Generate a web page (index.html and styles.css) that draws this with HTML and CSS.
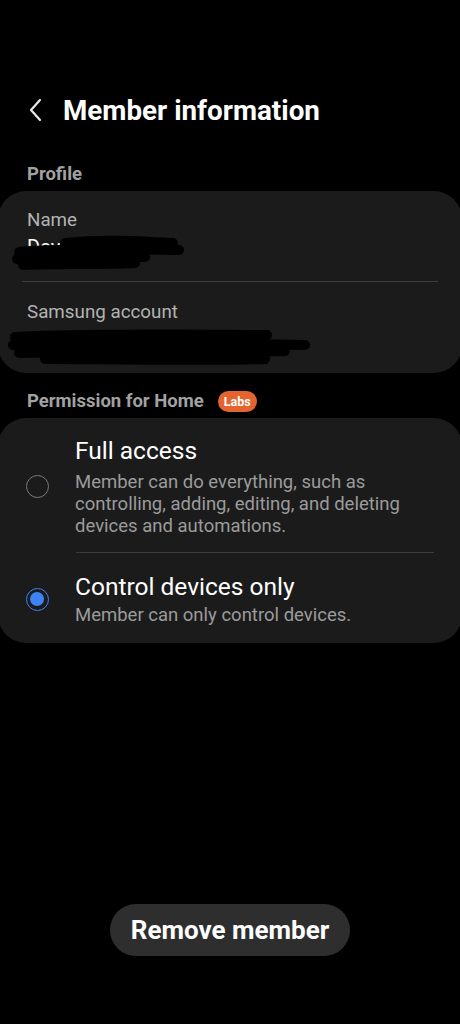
FILE: index.html
```html
<html charset="UTF-8">

<head>
  <link rel="stylesheet" href="styles.css">
</head>

<body>
  <div id="screen">
    <header class="topbar">
      <svg class="back" width="16" height="24" viewBox="0 0 16 24">
        <path d="M12 2 L3 12 L12 22" fill="none" stroke="#e8e8e8" stroke-width="2.2" stroke-linecap="round" stroke-linejoin="round"/>
      </svg>
      <h1>Member information</h1>
    </header>

    <p class="section">Profile</p>
    <div class="card profile">
      <div class="field">
        <p class="label">Name</p>
        <div class="value">
          <span class="valueText">Dav</span>
          <svg class="scribble" width="200" height="40" viewBox="0 0 200 40">
            <path d="M60 8 C100 4 130 6 168 8 M14 17 C60 13 120 14 174 15 M12 24 C50 20 100 22 140 22 M18 30 C50 28 90 30 130 28" fill="none" stroke="#000" stroke-width="10" stroke-linecap="round"/>
          </svg>
        </div>
      </div>
      <div class="divider"></div>
      <div class="field">
        <p class="label">Samsung account</p>
        <div class="value">
          <svg class="scribble" width="320" height="40" viewBox="0 0 320 40">
            <path d="M10 10 C100 6 200 8 262 8 M8 18 C120 14 220 16 300 18 M14 26 C100 24 200 26 280 24 M40 32 C120 32 200 34 260 32" fill="none" stroke="#000" stroke-width="10" stroke-linecap="round"/>
          </svg>
        </div>
      </div>
    </div>

    <div class="section sectionRow">
      <span>Permission for Home</span>
      <span class="badge">Labs</span>
    </div>
    <div class="card perms">
      <div class="option">
        <span class="radio"></span>
        <div class="optText">
          <p class="optTitle">Full access</p>
          <p class="optDesc">Member can do everything, such as controlling, adding, editing, and deleting devices and automations.</p>
        </div>
      </div>
      <div class="divider inset"></div>
      <div class="option">
        <span class="radio on"></span>
        <div class="optText">
          <p class="optTitle">Control devices only</p>
          <p class="optDesc">Member can only control devices.</p>
        </div>
      </div>
    </div>

    <div class="bottom">
      <button class="remove">Remove member</button>
    </div>
  </div>
</body>

</html>
```

FILE: styles.css
```css
body {
  margin: 0;
  background-color: black;
  font-family: Roboto, "Noto Sans", sans-serif;
  color: white;
}

p {
  margin: 0;
}

#screen {
  width: 460px;
  height: 1024px;
  display: flex;
  flex-direction: column;
  overflow: hidden;
}

.topbar {
  display: flex;
  align-items: center;
  padding: 92px 0 0 28px;
  height: 36px;
}

.back {
  margin-right: 19px;
}

.topbar h1 {
  margin: 0;
  font-size: 27.8px;
  font-weight: 700;
}

.section {
  margin: 35px 0 0 27px;
  font-size: 18.5px;
  font-weight: 700;
  color: #a2a2a2;
  height: 22px;
  line-height: 22px;
}

.sectionRow {
  display: flex;
  align-items: center;
  margin-top: 17px;
}

.badge {
  margin-left: 14px;
  background-color: #e3642f;
  color: white;
  font-size: 12.5px;
  font-weight: 700;
  line-height: 15px;
  padding: 3px 6px;
  border-radius: 11px;
}

.card {
  background-color: #1b1b1b;
  border-radius: 28px;
  margin: 6px -2px 0 -2px;
}

.profile {
  padding: 18px 0 12px 0;
}

.field {
  padding: 0 0 0 29px;
}

.label {
  font-size: 18.8px;
  color: #b3b3b3;
  line-height: 22px;
}

.value {
  position: relative;
  height: 34px;
  margin-top: 4px;
}

.valueText {
  font-size: 20px;
  color: white;
}

.scribble {
  position: absolute;
  left: -22px;
  top: 0;
}

.divider {
  height: 1px;
  background-color: #3b3b3b;
  margin: 12px 24px 19px 24px;
}

.perms {
  padding: 18px 0 17px 0;
}

.option {
  display: flex;
  align-items: center;
}

.radio {
  width: 23px;
  height: 23px;
  border: 1.5px solid #7a7a7a;
  border-radius: 50%;
  margin: 0 26px 0 28px;
  box-sizing: border-box;
  flex-shrink: 0;
  position: relative;
}

.radio.on {
  border-color: #3d83f5;
}

.radio.on::after {
  content: "";
  position: absolute;
  left: 3px;
  top: 3px;
  width: 14px;
  height: 14px;
  border-radius: 50%;
  background-color: #3d83f5;
}

.optTitle {
  font-size: 24.5px;
  line-height: 30px;
}

.optDesc {
  font-size: 18.5px;
  line-height: 22px;
  color: #9b9b9b;
  margin-top: 5px;
  max-width: 350px;
}

.option + .divider + .option .optDesc {
  margin-top: 2px;
}

.divider.inset {
  margin: 15px 28px 19px 78px;
}

.bottom {
  margin-top: auto;
  display: flex;
  justify-content: center;
  padding-bottom: 68px;
}

.remove {
  background-color: #2e2e2e;
  color: white;
  border: none;
  border-radius: 26px;
  font-family: Roboto, sans-serif;
  font-size: 26px;
  font-weight: 700;
  padding: 0 21px;
  height: 52px;
}
```
